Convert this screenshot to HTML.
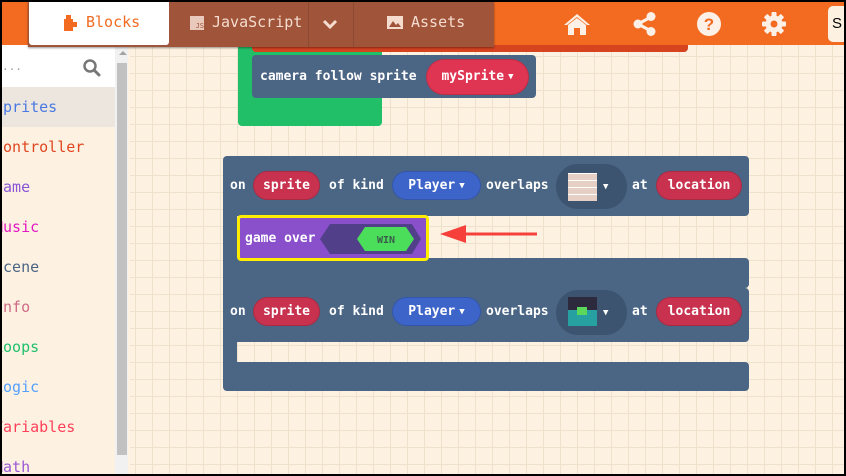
<!DOCTYPE html>
<html><head><style>
*{margin:0;padding:0;box-sizing:border-box}
body{width:846px;height:476px;overflow:hidden;background:#000;position:relative;font-family:"DejaVu Sans Mono","Liberation Mono",monospace}
#page{position:absolute;left:2px;top:2px;width:842px;height:472px;overflow:hidden;background:#fdf2e2}
.abs{position:absolute}
#canvas{left:128px;top:0;width:720px;height:476px;background-color:#fdf2e2;background-image:linear-gradient(#efe2cd 1px,transparent 1px),linear-gradient(90deg,#efe2cd 1px,transparent 1px);background-size:17px 17px;background-position:5px 3px}
.blk{position:absolute;background:#4b6584;border-radius:4px}
.pill{position:absolute;height:29px;border-radius:15px;color:#fff;font-weight:bold;font-size:13px;line-height:27px;text-align:center;border:1px solid rgba(0,0,0,.15);white-space:nowrap}
.pill i{font-style:normal;font-size:9px;vertical-align:1px;margin-left:4px}
.t{position:absolute;color:#fff;font-weight:bold;font-size:13px;line-height:16px;white-space:nowrap}
.cat{position:absolute;left:-8px;font-size:15px;line-height:18px}
</style></head><body><div id="page">
<!-- sidebar -->
<div class="abs" style="left:0;top:43px;width:113px;height:42px;background:#fff"></div>
<div class="abs" style="left:0;top:58px;color:#999;font-size:11px">...</div>
<svg class="abs" style="left:80px;top:56px" width="20" height="20" viewBox="0 0 20 20"><circle cx="8" cy="8" r="5.5" fill="none" stroke="#777" stroke-width="2.5"/><line x1="12" y1="12" x2="17" y2="17" stroke="#777" stroke-width="3" stroke-linecap="round"/></svg>
<div class="abs" style="left:0;top:85px;width:113px;height:40px;background:#ece6df"></div>
<div class="abs" style="left:113px;top:43px;width:13px;height:433px;background:#f1f1f1"></div>
<div class="abs" style="left:115px;top:61px;width:10px;height:392px;background:#c1c1c1"></div>
<div class="abs" style="left:117px;top:49px;width:0;height:0;border-left:4px solid transparent;border-right:4px solid transparent;border-bottom:4px solid #a3a3a3"></div>
<div class="cat" style="top:96px;color:#4a79e0">Sprites</div>
<div class="cat" style="top:136px;color:#e0451f">Controller</div>
<div class="cat" style="top:176px;color:#8a55d6">Game</div>
<div class="cat" style="top:216px;color:#e31ac3">Music</div>
<div class="cat" style="top:256px;color:#4b6584">Scene</div>
<div class="cat" style="top:296px;color:#d06a87">Info</div>
<div class="cat" style="top:336px;color:#20bf6b">Loops</div>
<div class="cat" style="top:376px;color:#54a0ff">Logic</div>
<div class="cat" style="top:416px;color:#ff3f59">Variables</div>
<div class="cat" style="top:456px;color:#9b59d6">Math</div>
<div id="canvas" class="abs"></div>
<!-- top partial blocks -->
<div class="abs" style="left:236px;top:30px;width:144px;height:94px;background:#22bf69;border-radius:4px"></div>
<div class="abs" style="left:250px;top:30px;width:436px;height:20px;background:#d5431f;border-radius:4px"></div>
<div class="blk" style="left:250px;top:53px;width:284px;height:43px"></div>
<div class="t" style="left:258px;top:67px">camera follow sprite</div>
<div class="pill" style="left:424px;top:57px;width:103px;height:36px;border-radius:18px;line-height:34px;background:#e03552">mySprite<i>▼</i></div>
<!-- event 1 -->
<div class="blk" style="left:221px;top:154px;width:526px;height:60px"></div>
<div class="blk" style="left:221px;top:200px;width:14px;height:90px;border-radius:0"></div>
<div class="blk" style="left:221px;top:256px;width:526px;height:30px"></div>
<div class="t" style="left:228px;top:176px">on</div>
<div class="pill" style="left:251px;top:169px;width:67px;background:#c8324f">sprite</div>
<div class="t" style="left:327px;top:176px">of kind</div>
<div class="pill" style="left:390px;top:169px;width:89px;background:#3d65c9">Player<i>▼</i></div>
<div class="t" style="left:484px;top:176px">overlaps</div>
<div class="abs" style="left:554px;top:162px;width:71px;height:45px;border-radius:22px;background:#3c546f"></div>
<div class="abs" style="left:566px;top:171px;width:29px;height:28px;background:#e6cfc5;background-image:linear-gradient(#fff 1px,transparent 1px);background-size:100% 7px"></div>
<div class="t" style="left:601px;top:177px;font-size:9px">▼</div>
<div class="t" style="left:630px;top:176px">at</div>
<div class="pill" style="left:654px;top:169px;width:86px;background:#c8324f">location</div>
<!-- game over -->
<div class="abs" style="left:235px;top:213px;width:192px;height:46px;background:#8a50cc;border:3px solid #ffec00;border-radius:4px"></div>
<div class="t" style="left:243px;top:229px">game over</div>
<svg class="abs" style="left:318px;top:222px" width="102" height="30"><polygon points="10,0 92,0 101,15 92,30 10,30 0,15" fill="#523f8a"/><polygon points="45,3 86,3 94,15 86,27 45,27 37,15" fill="#4ade5a"/><text x="66" y="19" font-family="DejaVu Sans Mono" font-weight="bold" font-size="10" fill="#3a5a4a" text-anchor="middle">WIN</text></svg>
<svg class="abs" style="left:438px;top:220px" width="100" height="24"><line x1="20" y1="12" x2="97" y2="12" stroke="#f5413a" stroke-width="3"/><polygon points="0,12 26,3 26,21" fill="#f5413a"/></svg>
<!-- event 2 -->
<div class="blk" style="left:221px;top:286px;width:526px;height:54px"></div>
<div class="blk" style="left:221px;top:330px;width:14px;height:50px;border-radius:0"></div>
<div class="blk" style="left:221px;top:360px;width:526px;height:29px"></div>
<div class="t" style="left:228px;top:302px">on</div>
<div class="pill" style="left:251px;top:295px;width:67px;background:#c8324f">sprite</div>
<div class="t" style="left:327px;top:302px">of kind</div>
<div class="pill" style="left:390px;top:295px;width:89px;background:#3d65c9">Player<i>▼</i></div>
<div class="t" style="left:484px;top:302px">overlaps</div>
<div class="abs" style="left:554px;top:288px;width:71px;height:45px;border-radius:22px;background:#3c546f"></div>
<div class="abs" style="left:566px;top:295px;width:29px;height:29px;background:linear-gradient(#2c2a3c 45%,#26a0a0 45%)"></div>
<div class="abs" style="left:575px;top:305px;width:10px;height:8px;background:#5bd85b"></div>
<div class="t" style="left:601px;top:303px;font-size:9px">▼</div>
<div class="t" style="left:630px;top:302px">at</div>
<div class="pill" style="left:654px;top:295px;width:86px;background:#c8324f">location</div>
<!-- toolbar -->
<div class="abs" style="left:0;top:0;width:842px;height:43px;background:#f26b21"></div>
<div class="abs" style="left:26px;top:0;width:466px;height:45px;background:#a0553a;box-shadow:0 1px 2px rgba(0,0,0,.4)"></div>
<div class="abs" style="left:27px;top:0;width:140px;height:43px;background:#fff;border-radius:0 0 3px 3px"></div>
<svg class="abs" style="left:62px;top:13px" width="14" height="16"><rect x="0" y="4" width="9" height="12" fill="#f26b21"/><rect x="2" y="0" width="5" height="5" fill="#f26b21"/><rect x="9" y="7" width="4" height="5" fill="#f26b21"/></svg>
<div class="abs" style="left:84px;top:11px;color:#f26b21;font-size:15px">Blocks</div>
<div class="abs" style="left:188px;top:14px;width:14px;height:14px;background:#e9c9bb;color:#a0553a;font-size:7px;line-height:20px;text-align:right">JS</div>
<div class="abs" style="left:210px;top:11px;color:#f5dccf;font-size:15px">JavaScript</div>
<div class="abs" style="left:306px;top:0;width:1px;height:45px;background:#8d4a32"></div>
<div class="abs" style="left:351px;top:0;width:1px;height:45px;background:#8d4a32"></div>
<svg class="abs" style="left:320px;top:16px" width="16" height="12"><polyline points="2,3 8,9 14,3" fill="none" stroke="#f5dccf" stroke-width="3"/></svg>
<svg class="abs" style="left:385px;top:14px" width="16" height="13"><rect x="0" y="0" width="16" height="13" fill="#f5dccf"/><polygon points="2,11 6,5 9,9 11,7 14,11" fill="#a0553a"/></svg>
<div class="abs" style="left:409px;top:11px;color:#f5dccf;font-size:15px">Assets</div>
<svg class="abs" style="left:561px;top:10px" width="28" height="24" viewBox="0 0 28 24"><polygon points="14,2 1,13 4,13 14,5 24,13 27,13" fill="#fdf0e6"/><polygon points="5,13 14,6 23,13 23,23 17,23 17,16 11,16 11,23 5,23" fill="#fdf0e6"/></svg>
<svg class="abs" style="left:630px;top:9px" width="26" height="26"><line x1="6" y1="13" x2="19" y2="6" stroke="#fdf0e6" stroke-width="3"/><line x1="6" y1="13" x2="19" y2="20" stroke="#fdf0e6" stroke-width="3"/><circle cx="6" cy="13" r="4.5" fill="#fdf0e6"/><circle cx="19" cy="5.5" r="4.5" fill="#fdf0e6"/><circle cx="19" cy="20.5" r="4.5" fill="#fdf0e6"/></svg>
<svg class="abs" style="left:694px;top:9px" width="26" height="26"><circle cx="13" cy="13" r="12" fill="#fdf0e6"/><text x="13" y="19" text-anchor="middle" font-family="Liberation Sans" font-weight="bold" font-size="17" fill="#f26b21">?</text></svg>
<svg class="abs" style="left:759px;top:9px" width="26" height="26" viewBox="0 0 26 26"><g fill="#fdf0e6"><circle cx="13" cy="13" r="8.5"/><rect x="10.5" y="1" width="5" height="24" rx="1"/><rect x="10.5" y="1" width="5" height="24" rx="1" transform="rotate(45 13 13)"/><rect x="10.5" y="1" width="5" height="24" rx="1" transform="rotate(90 13 13)"/><rect x="10.5" y="1" width="5" height="24" rx="1" transform="rotate(135 13 13)"/></g><circle cx="13" cy="13" r="3.5" fill="#f26b21"/></svg>
<div class="abs" style="left:826px;top:4px;width:30px;height:36px;background:#fdf2e2;border-radius:5px;font-family:'Liberation Sans';font-size:15px;line-height:36px;padding-left:4px">S</div>
</div></body></html>
